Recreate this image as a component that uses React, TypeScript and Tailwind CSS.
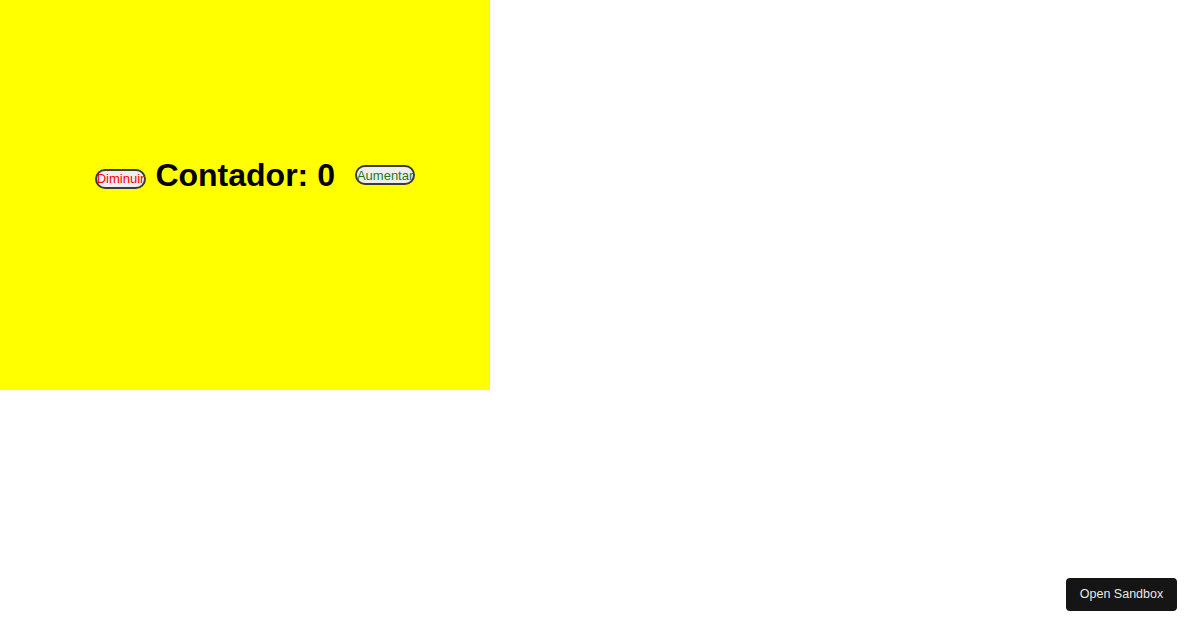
export default function App() {
  return (
    <div className="relative w-[1200px] h-[630px] bg-white" style={{ fontFamily: '"Liberation Sans", Arial, sans-serif' }}>
      <div className="w-[490px] h-[390px] bg-[#ffff00] flex items-center justify-center pl-[20px] pb-[40px]">
        <button className="mt-[7px] h-[20px] px-0 rounded-full border-2 border-[#3b3b3b] bg-[#efefef] text-[13px] leading-none text-[#ff0000]">
          Diminuir
        </button>
        <h1 className="ml-[9px] mr-[20px] text-[32px] font-bold leading-none text-black">Contador: 0</h1>
        <button className="h-[20px] px-0 rounded-full border-2 border-[#3b3b3b] bg-[#efefef] text-[13px] leading-none text-[#1e7a1e]">
          Aumentar
        </button>
      </div>
      <button
        className="absolute left-[1066px] top-[578px] w-[111px] h-[33px] rounded-[4px] bg-[#151515] text-[12.5px] text-[#e8e8e8]"
        style={{ fontFamily: '"Liberation Sans", Arial, sans-serif' }}
      >
        Open Sandbox
      </button>
    </div>
  );
}
